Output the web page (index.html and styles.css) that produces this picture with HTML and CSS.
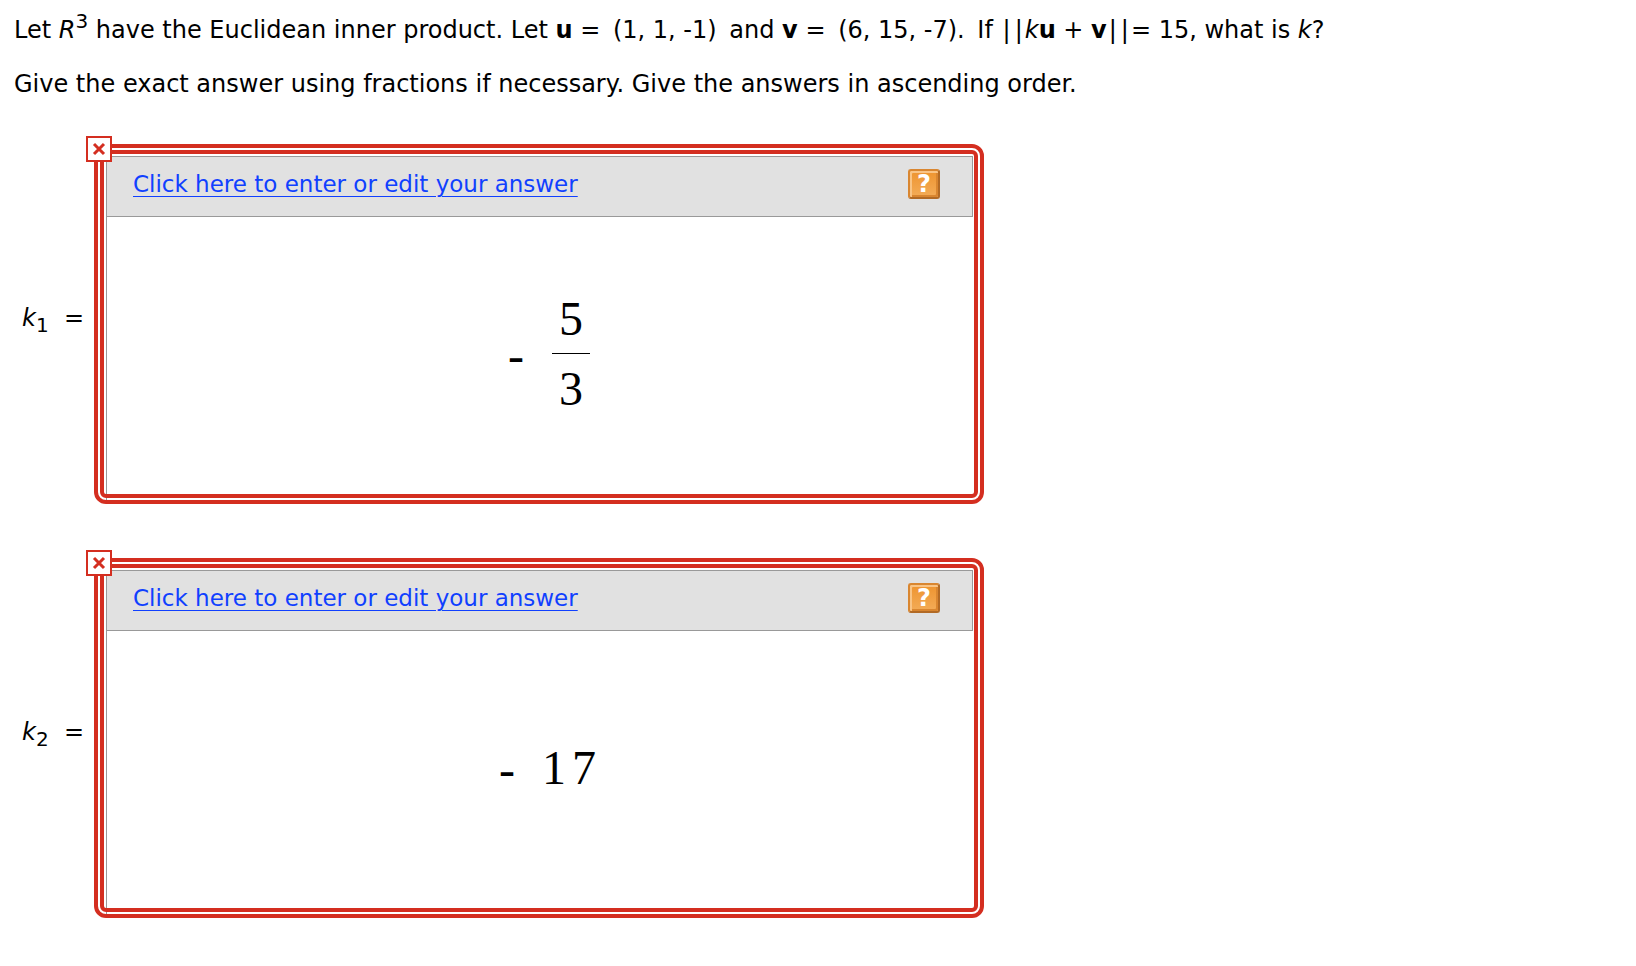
FILE: index.html
```html
<!DOCTYPE html>
<html lang="en">
<head>
    <meta charset="UTF-8">
    <meta name="viewport" content="width=device-width, initial-scale=1.0">
    <title>Euclidean inner product</title>
    <link rel="stylesheet" href="styles.css">
</head>
<body>
    <div class="question">
        <p>Let <i>R</i><sup>3</sup> have the Euclidean inner product. Let <b>u</b> = <span class="vector">(1, 1, -1)</span> and <b>v</b> = <span class="vector">(6, 15, -7).</span> If <span class="bar">|</span><span class="bar">|</span><i>k</i><b>u</b> + <b>v</b><span class="bar">|</span><span class="bar">|</span>= 15, what is <i>k</i>?</p>
        <p>Give the exact answer using fractions if necessary. Give the answers in ascending order.</p>
    </div>

    <div class="answer">
        <div class="label"><i>k</i><sub>1</sub> &nbsp;=</div>
        <div class="frame">
            <span class="wrong">
                <svg width="14" height="14" viewBox="0 0 14 14"><path d="M2 2L12 12M12 2L2 12"/></svg>
            </span>
            <div class="header">
                <a href="#">Click here to enter or edit your answer</a>
                <button type="button" class="help" aria-label="Help">?</button>
            </div>
            <div class="math">
                <span class="minus">-</span>
                <span class="fraction">
                    <span class="top">5</span>
                    <span class="bottom">3</span>
                </span>
            </div>
        </div>
    </div>

    <div class="answer">
        <div class="label"><i>k</i><sub>2</sub> &nbsp;=</div>
        <div class="frame">
            <span class="wrong">
                <svg width="14" height="14" viewBox="0 0 14 14"><path d="M2 2L12 12M12 2L2 12"/></svg>
            </span>
            <div class="header">
                <a href="#">Click here to enter or edit your answer</a>
                <button type="button" class="help" aria-label="Help">?</button>
            </div>
            <div class="math">
                <span class="minus">-</span>
                <span class="number"><span>1</span><span>7</span></span>
            </div>
        </div>
    </div>
</body>
</html>
```
FILE: styles.css
```css
body {
    margin: 0;
    padding: 15px 14px;
    font-family: Verdana, "DejaVu Sans", sans-serif;
    font-size: 24px;
    line-height: 30px;
    color: #000;
    background-color: #fff;
}
.question {
    padding-bottom: 9px;
}
.question p {
    margin: 0 0 24px;
}
.vector {
    padding: 0 5px;
}
.bar {
    padding: 0 2px;
}
sup, sub {
    font-size: 20px;
    line-height: 0;
}
sup {
    vertical-align: 10px;
}
.answer {
    display: flex;
    align-items: center;
    margin-bottom: 42px;
}
.label {
    width: 72px;
    padding-left: 8px;
    box-sizing: border-box;
}
.frame {
    position: relative;
    flex: 1;
    max-width: 890px;
    box-sizing: border-box;
    margin: 12px 0 0 8px;
    padding: 2px 1px 0 2px;
    border: 4px solid #d42e20;
    border-radius: 12px;
}
/* inner red line of the double frame */
.frame::before {
    content: "";
    position: absolute;
    inset: 2px;
    border: 4px solid #d42e20;
    border-radius: 6px;
    pointer-events: none;
}
.wrong {
    position: absolute;
    top: -12px;
    left: -12px;
    width: 22px;
    height: 22px;
    display: flex;
    align-items: center;
    justify-content: center;
    border: 2px solid #d42e20;
    background-color: #fff;
}
.wrong path {
    fill: none;
    stroke: #d42e20;
    stroke-width: 3;
}
.header {
    display: flex;
    justify-content: space-between;
    align-items: center;
    box-sizing: border-box;
    height: 61px;
    margin: 6px 6px 0 6px;
    padding: 0 32px 5px 26px;
    border: 1px solid #999;
    background-color: #e1e1e1;
}
.header a {
    font-size: 23px;
    line-height: 28px;
    color: #1040ff;
    text-decoration-thickness: 1px;
    text-underline-offset: 4px;
}
.help {
    width: 32px;
    height: 30px;
    padding: 0;
    border: 2px solid;
    border-color: #d98630 #b26a25 #b26a25 #d98630;
    border-radius: 3px;
    background: linear-gradient(#ee942f, #f3ac58);
    box-shadow: inset 2px 2px #f9c485, inset -2px -2px #d98630;
    color: #fff;
    font: bold 24px/24px "DejaVu Sans", sans-serif;
}
.math {
    display: flex;
    align-items: center;
    justify-content: center;
    box-sizing: border-box;
    height: 283px;
    margin: 0 6px 0 6px;
    padding: 0 0 10px 18px;
    border-left: 1px solid #999;
    font-family: "Times New Roman", "Liberation Serif", serif;
    font-size: 48px;
    line-height: 54px;
}
.minus {
    padding-top: 4px;
    margin-right: 24px;
}
.fraction {
    display: flex;
    flex-direction: column;
    margin-left: 4px;
}
.top, .bottom {
    padding: 0 7px;
}
.top {
    padding-bottom: 7px;
    border-bottom: 1px solid #000;
}
.bottom {
    padding-top: 8px;
}
.number {
    display: flex;
}
.number span {
    padding: 0 3px;
}
```
